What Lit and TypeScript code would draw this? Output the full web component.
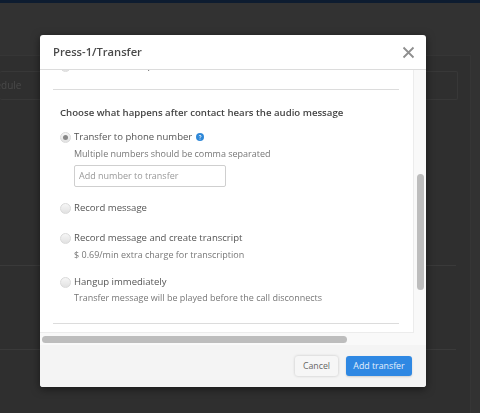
import { LitElement, html, css } from "lit";
import { customElement } from "lit/decorators.js";

@customElement("app-root")
export class AppRoot extends LitElement {
  static styles = css`
    :host { display: block; width: 480px; height: 413px; overflow: hidden; position: relative; background: #323232; font-family: "Open Sans", sans-serif; color: #444; }
    * { box-sizing: border-box; }
    .stage { width: 480px; height: 413px; position: relative; filter: blur(.35px); }
    .topbar { height: 3px; background: #0d1c30; }
    .bg { height: 410px; width: 471px; margin-top: 52px; padding-top: 15px; display: flex; flex-direction: column; background: #2f2f2f; border-top: 1px solid #363636; border-right: 1px solid #363636; }
    .bg-row { width: 458px; height: 29px; border: 1px solid #383838; border-left: 0; font-size: 10px; line-height: 27px; color: #4a4a4a; border-radius: 2px; }
    .bg-row span { display: block; margin-left: -21px; }
    .bg-line { width: 456px; height: 1px; background: #3a3a3a; }
    .bg-line.a { margin-top: 165px; }
    .bg-line.b { margin-top: 83px; }
    .modal { position: absolute; left: 40px; top: 35px; width: 386px; height: 352px; background: #fff; border-radius: 3px; box-shadow: 0 2px 8px rgba(0,0,0,.5); display: flex; flex-direction: column; overflow: hidden; }
    .head { height: 35px; flex: none; display: flex; align-items: center; justify-content: space-between; padding: 0 11px 1px 13px; border-bottom: 1px solid #dcdcdc; }
    .title { font-size: 11.2px; font-weight: 600; color: #4a4a4a; }
    .close { width: 13px; height: 13px; display: block; margin-top: 1px; }
    .body { flex: none; height: 275px; display: grid; grid-template-columns: 374px 12px; grid-template-rows: 263px 12px; background: #f9f9f9; }
    .view { overflow: hidden; background: #fff; border-right: 1px solid #ececec; border-bottom: 1px solid #ececec; }
    .vtrack { padding: 104px 0 0 3px; }
    .vthumb { width: 7px; height: 116px; border-radius: 4px; background: #bdbdbd; }
    .htrack { padding: 3px 0 0 2px; grid-column: 1 / 3; }
    .hthumb { width: 305px; height: 7px; border-radius: 4px; background: #bdbdbd; }
    .content { width: 450px; height: 576px; padding: 211px 0 0 13px; }
    .sec { width: 346px; }
    .sec.inner { padding-left: 7px; }
    hr { width: 346px; height: 1px; border: 0; background: #dcdcdc; margin: 0; }
    .h { font-size: 9.65px; font-weight: 600; line-height: 16px; color: #444; margin-top: 15px; white-space: nowrap; }
    .opt { display: flex; align-items: center; gap: 3px; font-size: 9.55px; line-height: 16px; height: 16px; color: #555; white-space: nowrap; }
    .radio { width: 11px; height: 11px; border-radius: 50%; border: 1px solid #dadada; background: linear-gradient(#f6f6f6,#e2e2e2); flex: none; display: flex; align-items: center; justify-content: center; }
    .radio.on::after { content: ""; width: 5px; height: 5px; border-radius: 50%; background: #888; }
    .hint { font-size: 9px; line-height: 14px; height: 14px; color: #777; padding-left: 14px; white-space: nowrap; }
    .help { width: 8px; height: 8px; margin-left: 1px; flex: none; }
    .input { margin: 4px 0 0 14px; width: 152px; height: 22px; border: 1px solid #cfcfcf; border-radius: 2px; font-size: 9px; color: #999; line-height: 20px; padding-left: 4px; white-space: nowrap; }
    .mt1 { margin-top: 8px; } .mt2 { margin-top: 2px; } .mt13 { margin-top: 13px; } .mt14 { margin-top: 14px; } .mt12 { margin-top: 12px; } .mt01 { margin-top: 1px; } .mt18 { margin-top: 18px; } .mt15 { margin-top: 15px; }
    .foot { flex: 1; background: #f4f4f4; display: flex; justify-content: flex-end; align-items: flex-start; gap: 8px; padding: 11px 14px 0 0; }
    .btn { height: 20px; border-radius: 3px; font-size: 8.8px; line-height: 20px; text-align: center; }
    .cancel { width: 43px; background: #f6f6f6; color: #666; box-shadow: 0 0 3px rgba(0,0,0,.2); }
    .add { width: 66px; background: #2f88e3; color: #e4f0fc; box-shadow: 0 1px 2px rgba(0,0,0,.15); }
  `;

  firstUpdated() {
    const s = this.renderRoot.querySelector(".view") as HTMLElement;
    s.scrollTop = 223;
  }

  render() {
    return html`
      <div class="stage">
      <div class="topbar"></div>
      <div class="bg">
        <div class="bg-row"><span>Schedule</span></div>
        <div class="bg-line a"></div>
        <div class="bg-line b"></div>
      </div>
      <div class="modal">
        <div class="head">
          <div class="title">Press-1/Transfer</div>
          <svg class="close" viewBox="0 0 13 13"><path d="M1.5 1.5 11.5 11.5M11.5 1.5 1.5 11.5" stroke="#8f8f8f" stroke-width="1.8" fill="none"/></svg>
        </div>
        <div class="body">
          <div class="view">
            <div class="content">
              <div class="sec inner">
                <div class="opt"><span class="radio"></span>No actions after press-1</div>
              </div>
              <hr class="mt15" />
              <div class="sec inner">
                <div class="h">Choose what happens after contact hears the audio message</div>
                <div class="opt mt1"><span class="radio on"></span>Transfer to phone number
                  <svg class="help" viewBox="0 0 8 8"><circle cx="4" cy="4" r="4" fill="#2f88d8"/><path d="M2.9 3.1C3 2.3 5.1 2.2 5.1 3.2 5.1 4 4 3.9 4 4.8" stroke="#fff" stroke-width=".9" fill="none"/><circle cx="4" cy="6" r=".5" fill="#fff"/></svg>
                </div>
                <div class="hint mt2">Multiple numbers should be comma separated</div>
                <div class="input">Add number to transfer</div>
                <div class="opt mt13"><span class="radio"></span>Record message</div>
                <div class="opt mt14"><span class="radio"></span>Record message and create transcript</div>
                <div class="hint mt2">$ 0.69/min extra charge for transcription</div>
                <div class="opt mt12"><span class="radio"></span>Hangup immediately</div>
                <div class="hint mt01">Transfer message will be played before the call disconnects</div>
              </div>
              <hr class="mt18" />
            </div>
          </div>
          <div class="vtrack"><div class="vthumb"></div></div>
          <div class="htrack"><div class="hthumb"></div></div>
        </div>
        <div class="foot">
          <div class="btn cancel">Cancel</div>
          <div class="btn add">Add transfer</div>
        </div>
      </div>
      </div>
    `;
  }
}
